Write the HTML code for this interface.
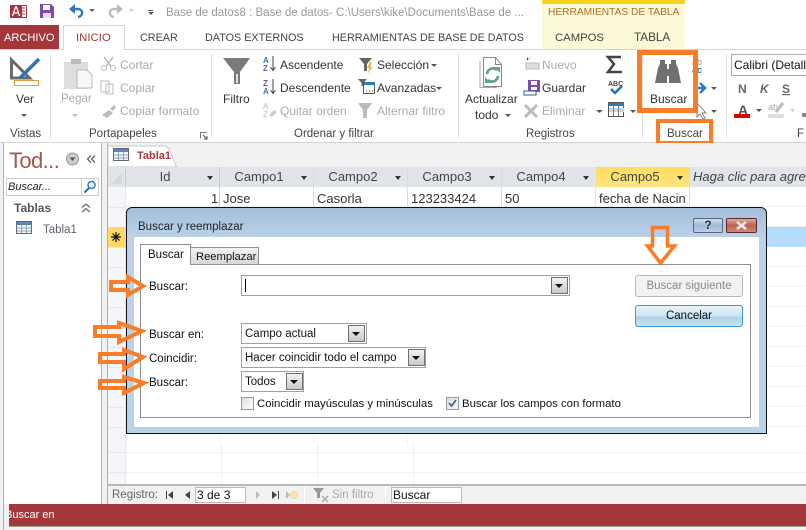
<!DOCTYPE html>
<html><head><meta charset="utf-8"><style>
html,body{margin:0;padding:0}
body{width:806px;height:530px;overflow:hidden;position:relative;background:#f1f1f1;font-family:"Liberation Sans",sans-serif;font-size:12px;color:#444}
.a,.t{position:absolute}
.t{white-space:nowrap;line-height:16px}
.g{color:#aaa}
.h{font-size:13px;color:#444;transform:translateX(-50%)}
.c{font-size:13px;color:#333}
.d{color:#111;font-size:11.500px}
.tb{font-size:10.800px}
.b{position:absolute;width:17px;height:17px;box-sizing:border-box;border:1px solid #707070;background:linear-gradient(#f2f2f2,#c8c8c8)}
.b:after{content:"";position:absolute;left:3px;top:6px;border:4px solid transparent;border-top:4px solid #111;border-bottom:0}
.cb{position:absolute;box-sizing:border-box;border:1px solid #9a9a9a;background:#fff}
.tri{position:absolute;width:0;height:0;border:3px solid transparent;border-top:3px solid #555;border-bottom:0}
.sl{position:absolute;left:108px;width:18px;height:1px;background:#e6e6ee}
.rl{position:absolute;left:767px;width:39px;height:1px;background:#f0f0f0}
svg{position:absolute;overflow:visible}
</style></head><body>

<!-- title bar -->
<div class="a" style="left:0;top:0;width:806px;height:50px;background:#fff"></div>
<div class="a" style="left:542px;top:0;width:143px;height:50px;background:#fdf9d7"></div>
<div class="a" style="left:542px;top:0;width:143px;height:4px;background:#f5d21c"></div>
<svg style="left:0;top:0" width="160" height="25">
 <rect x="18.500" y="5.500" width="8" height="12" fill="#fff" stroke="#a4373a"/>
 <path d="M20 8h5M20 11h5M20 14h5" stroke="#a4373a"/>
 <rect x="10" y="5" width="12" height="13" fill="#a4373a"/>
 <path d="M12.500 16l3-9h1l3 9M14 13h4" stroke="#fff" fill="none" stroke-width="1.300"/>
 <path d="M40 4h11l3 3v11h-14z" fill="#7a4bb0"/><rect x="43" y="5" width="7" height="5" fill="#fff"/><rect x="43" y="13" width="8" height="5" fill="#e6def0"/>
 <path d="M72 9h6c5 0 6 7 0 8" stroke="#2a7bbf" stroke-width="2.400" fill="none"/><path d="M75 4l-6 5 6 5z" fill="#2a7bbf"/>
 <path d="M89 9h6l-3 3z" fill="#666"/>
 <path d="M120 9h-6c-5 0-6 7 0 8" stroke="#bbb" stroke-width="2.400" fill="none"/><path d="M117 4l6 5-6 5z" fill="#bbb"/>
 <path d="M129 9h5l-2.500 3z" fill="#ccc"/>
 <path d="M148 10.500h5" stroke="#555"/><path d="M148 12h6l-3 3z" fill="#555"/>
</svg>
<div class="t" style="left:166px;top:5px;color:#999;font-size:11.500px">Base de datos8 : Base de datos- C:\Users\kike\Documents\Base de ...</div>
<div class="t" style="left:548px;top:5px;color:#a8702c;font-size:10.200px">HERRAMIENTAS DE TABLA</div>

<!-- tabs -->
<div class="a" style="left:0;top:25px;width:59px;height:25px;background:#a4373a"></div>
<div class="a" style="left:0;top:49px;width:806px;height:1px;background:#d4d4d4"></div>
<div class="a" style="left:63px;top:25px;width:60px;height:25px;background:#fff;border:1px solid #d4d4d4;border-bottom:0"></div>
<div class="t" style="left:4px;top:30px;color:#fff;font-size:11.100px">ARCHIVO</div>
<div class="t" style="left:76px;top:30px;color:#a4373a;font-size:11.400px">INICIO</div>
<div class="t tb" style="left:140px;top:30px">CREAR</div>
<div class="t tb" style="left:205px;top:30px">DATOS EXTERNOS</div>
<div class="t tb" style="left:332px;top:30px">HERRAMIENTAS DE BASE DE DATOS</div>
<div class="t" style="left:555px;top:30px;font-size:11.300px">CAMPOS</div>
<div class="t" style="left:634px;top:30px;font-size:11.700px">TABLA</div>

<!-- ribbon -->
<div class="a" style="left:0;top:50px;width:806px;height:92px;background:#fff;border-bottom:1px solid #d4d4d4"></div>
<div class="a" style="left:50px;top:54px;width:1px;height:84px;background:#e0e0e0"></div>
<div class="a" style="left:211px;top:54px;width:1px;height:84px;background:#e0e0e0"></div>
<div class="a" style="left:458px;top:54px;width:1px;height:84px;background:#e0e0e0"></div>
<div class="a" style="left:642px;top:54px;width:1px;height:84px;background:#e0e0e0"></div>
<div class="a" style="left:726px;top:54px;width:1px;height:84px;background:#e0e0e0"></div>

<svg style="left:0;top:50px" width="806" height="92">
 <!-- Ver -->
 <path d="M11.500 10v18h18z" fill="none" stroke="#6a6a6a" stroke-width="3"/>
 <path d="M20 28l19-19" stroke="#2b73c0" stroke-width="3.500"/>
 <rect x="14.500" y="30.500" width="24" height="5" fill="#fff" stroke="#e89a3c"/>
 <!-- Pegar -->
 <path d="M64 12h24v27h-24z" fill="#ddd"/><rect x="71" y="9" width="10" height="5" fill="#bbb"/>
 <path d="M77 20h10l5 5v13h-15z" fill="#f7f7f7" stroke="#bbb"/>
 <!-- cortar -->
 <path d="M104 7l9 12M113 7l-9 12" stroke="#bbb" stroke-width="1.500"/><circle cx="104" cy="18" r="2.500" fill="#fff" stroke="#bbb"/><circle cx="113" cy="18" r="2.500" fill="#fff" stroke="#bbb"/>
 <!-- copiar -->
 <path d="M101 31h8v11h-8zM106 34h7v10h-7z" fill="#fff" stroke="#bbb"/>
 <!-- copiar formato -->
 <path d="M102 65l7-5 4 3-6 5zM110 59l4-4 2 2-3 4z" fill="#bbb"/>
 <!-- Filtro -->
 <path d="M223 8h27l-10 14v12h-6v-12z" fill="#7a7a7a"/><path d="M236 24h2v9h-2z" fill="#ddd"/>
 <!-- sort icons -->
 <text x="263" y="13" font-size="8" font-family="Liberation Sans" fill="#2a7bbf" font-weight="bold">A</text><text x="263" y="21" font-size="8" font-family="Liberation Sans" fill="#7a4bb0" font-weight="bold">Z</text>
 <path d="M273 6v14M270.500 17l2.500 3.500 2.500-3.500" stroke="#444" fill="none"/>
 <text x="263" y="36" font-size="8" font-family="Liberation Sans" fill="#7a4bb0" font-weight="bold">Z</text><text x="263" y="44" font-size="8" font-family="Liberation Sans" fill="#2a7bbf" font-weight="bold">A</text>
 <path d="M273 29v14M270.500 40l2.500 3.500 2.500-3.500" stroke="#444" fill="none"/>
 <text x="263" y="59" font-size="8" font-family="Liberation Sans" fill="#bbb">A</text><text x="263" y="67" font-size="8" font-family="Liberation Sans" fill="#bbb">Z</text>
 <path d="M269 65l5-5 3 2-5 5z" fill="#ccc"/>
 <!-- seleccion -->
 <path d="M359 8h13l-5 6v7h-3v-7z" fill="#666"/><path d="M370 12l-3 6h2.500l-2 6 5-7h-2.500l2-5z" fill="#f0b13c"/>
 <!-- avanzadas -->
 <path d="M358 29h9l-3.500 4v3h-2v-3z" fill="#666"/><rect x="363.500" y="32.500" width="11" height="11" fill="#fff" stroke="#555"/><rect x="364" y="32" width="11" height="3" fill="#2a7bbf"/><path d="M366 41h1M369 41h1M372 41h1" stroke="#444"/>
 <!-- alternar -->
 <path d="M358 53h14l-5 7v8h-4v-8z" fill="#bbb"/>
 <!-- actualizar -->
 <path d="M483.500 7.500h12l6 7v22h-18z" fill="#fff" stroke="#888"/><path d="M495.500 7.500v7h6" fill="none" stroke="#888"/><path d="M480 10.500v27h17" stroke="#aaa" fill="none"/>
 <path d="M487 24a6 6 0 0 1 10-4" stroke="#5fa58e" stroke-width="2.800" fill="none"/><path d="M498 26a6 6 0 0 1-10 4" stroke="#5fa58e" stroke-width="2.800" fill="none"/>
 <path d="M494 17h6v6zM491 33h-6v-6z" fill="#5fa58e"/>
 <!-- nuevo -->
 <rect x="526" y="13" width="13" height="6" fill="#ddd" stroke="#bbb"/><path d="M527 7l2 2-2 2M530 6v4" stroke="#ddd"/>
 <!-- guardar -->
 <rect x="528" y="30" width="12" height="12" fill="#7a4bb0"/><rect x="531" y="31" width="6" height="4" fill="#fff"/><rect x="531" y="37" width="6" height="3" fill="#fff"/><path d="M524 41h12v4h-12z" fill="#fff" stroke="#2a5f9e"/>
 <!-- eliminar -->
 <path d="M525 55l12 12M537 55l-12 12" stroke="#bbb" stroke-width="3"/>
 <!-- sigma etc -->
 <path d="M621 7h-13l6 7-6 8h14" fill="none" stroke="#444" stroke-width="2.500"/>
 <text x="608" y="36" font-size="7" font-weight="bold" font-family="Liberation Sans" fill="#444">ABC</text>
 <path d="M611 39l4 4 7-7" fill="none" stroke="#2a6fb8" stroke-width="2.500"/>
 <rect x="608.500" y="52.500" width="15" height="14" fill="#fff" stroke="#555"/><rect x="609" y="53" width="15" height="3" fill="#2a7bbf"/><rect x="609" y="58" width="15" height="4" fill="#c4d8e8"/><path d="M613.500 56v10M618.500 56v10" stroke="#777"/>
 <path d="M596 60h7l-3.500 3zM630 60h6l-3 3z" fill="#555"/>
 <!-- binoculars -->
 <path d="M655 33l3-15 2-4v-4h5v4h2v19h-12zM669 14h2v-4h5v4l2 4 3 15h-12z" fill="#6f6f6f"/><rect x="666" y="19" width="5" height="7" fill="#6f6f6f"/>
 <!-- right of buscar -->
 <text x="692" y="15" font-size="9" font-family="Liberation Sans" fill="#999">ab</text>
 <text x="692" y="23" font-size="9" font-weight="bold" font-family="Liberation Sans" fill="#2a6fb8">ac</text>
 <path d="M698 38h6M700 33l5 5-5 5" stroke="#2a7bbf" stroke-width="2.500" fill="none"/>
 <path d="M697 53v14l3-3 3 5 2-1-3-5h4z" fill="#fff" stroke="#888"/>
 <path d="M711 37h6l-3 3zM711 60h6l-3 3z" fill="#555"/>
 <!-- font -->
 <rect x="731.500" y="4.500" width="76" height="21" fill="#fff" stroke="#aaa"/>
 <text x="738" y="43" font-size="12" font-weight="bold" font-family="Liberation Sans" fill="#666">N</text>
 <text x="760" y="43" font-size="12" font-weight="bold" font-style="italic" font-family="Liberation Sans" fill="#666">K</text>
 <text x="782" y="43" font-size="12" font-weight="bold" font-family="Liberation Sans" fill="#666" text-decoration="underline">S</text>
 <text x="738" y="65" font-size="14" font-weight="bold" font-family="Liberation Sans" fill="#555">A</text>
 <rect x="734" y="64" width="16" height="4" fill="#e00000"/>
 <path d="M756 59h6l-3 3z" fill="#555"/>
 <text x="768" y="60" font-size="9" font-family="Liberation Sans" fill="#aaa">ab</text>
 <rect x="768" y="64" width="16" height="4" fill="#ddd"/>
 <path d="M776 62l7-9" stroke="#bbb" stroke-width="3"/>
 <path d="M790 59h5l-2.500 3z" fill="#ccc"/>
 <rect x="802" y="63" width="4" height="4" fill="#888"/>
</svg>

<div class="t" style="left:16px;top:91px;color:#333">Ver</div>
<div class="tri" style="left:21px;top:114px"></div>
<div class="t" style="left:10px;top:126px;font-size:11.500px">Vistas</div>
<div class="t g" style="left:61px;top:91px;font-size:11.500px">Pegar</div>
<div class="tri" style="left:72px;top:114px;border-top-color:#bbb"></div>
<div class="t g" style="left:120px;top:57px">Cortar</div>
<div class="t g" style="left:120px;top:80px">Copiar</div>
<div class="t g" style="left:120px;top:103px">Copiar formato</div>
<div class="t" style="left:89px;top:126px;font-size:11.500px">Portapapeles</div>
<svg style="left:200px;top:132px" width="8" height="8"><path d="M0.500 6.500v-6h6" fill="none" stroke="#777"/><path d="M3 3l4 4M7 4v3h-3" fill="none" stroke="#555"/></svg>
<div class="t" style="left:223px;top:91px;color:#333">Filtro</div>
<div class="t" style="left:280px;top:57px;color:#333">Ascendente</div>
<div class="t" style="left:280px;top:80px;color:#333">Descendente</div>
<div class="t g" style="left:280px;top:103px">Quitar orden</div>
<div class="t" style="left:377px;top:57px;color:#333">Selección</div>
<div class="tri" style="left:431px;top:64px"></div>
<div class="t" style="left:377px;top:80px;color:#333">Avanzadas</div>
<div class="tri" style="left:436px;top:87px"></div>
<div class="t g" style="left:377px;top:103px">Alternar filtro</div>
<div class="t" style="left:294px;top:126px;font-size:11.500px">Ordenar y filtrar</div>
<div class="t" style="left:465px;top:91px;color:#333">Actualizar</div>
<div class="t" style="left:475px;top:107px;color:#333">todo</div>
<div class="tri" style="left:505px;top:114px"></div>
<div class="t g" style="left:542px;top:57px">Nuevo</div>
<div class="t" style="left:542px;top:80px;color:#333">Guardar</div>
<div class="t g" style="left:542px;top:103px">Eliminar</div>
<div class="t" style="left:526px;top:126px;font-size:11.500px">Registros</div>
<div class="t" style="left:650px;top:91px;color:#333">Buscar</div>
<div class="t" style="left:667px;top:126px;font-size:11.500px">Buscar</div>
<div class="t" style="left:734px;top:57px;color:#111">Calibri (Detall</div>
<div class="t" style="left:797px;top:126px;font-size:11.500px">F</div>

<div class="a" style="left:637px;top:50px;width:61px;height:63px;box-sizing:border-box;border:5px solid #f97d26"></div>
<div class="a" style="left:656px;top:119px;width:57px;height:26px;box-sizing:border-box;border:4px solid #f97d26"></div>

<!-- Nav pane -->
<div class="a" style="left:3px;top:143px;width:99px;height:361px;box-sizing:border-box;background:#fff;border-left:1px solid #b0b0b0;border-right:1px solid #b0b0b0"></div>
<div class="t" style="left:9px;top:146px;font-size:22px;line-height:30px;letter-spacing:-.6px;color:#a4574a">Tod...</div>
<svg style="left:65px;top:152px" width="35" height="16"><circle cx="7.500" cy="7" r="6" fill="#ccc" stroke="#999"/><path d="M4.500 5.500h6l-3 3.500z" fill="#555"/><path d="M26 3.500l-3.500 3.500 3.500 3.500M30 3.500l-3.500 3.500 3.500 3.500" stroke="#666" fill="none" stroke-width="1.300"/></svg>
<div class="a" style="left:6px;top:178px;width:93px;height:18px;box-sizing:border-box;background:#fff;border:1px solid #ccc"></div>
<div class="a" style="left:81px;top:178px;width:1px;height:18px;background:#ccc"></div>
<div class="t" style="left:8px;top:179px;font-size:11px;font-style:italic;color:#222">Buscar...</div>
<svg style="left:83px;top:180px" width="14" height="14"><circle cx="8.500" cy="5" r="3.500" fill="#fff" stroke="#2a7bbf" stroke-width="1.500"/><path d="M6 8l-4.500 4.500" stroke="#2a6fb8" stroke-width="2"/></svg>
<div class="t" style="left:14px;top:200px;font-weight:bold;color:#555">Tablas</div>
<svg style="left:81px;top:203px" width="10" height="10"><path d="M1 4.500l4-3.500 4 3.500M1 9l4-3.500 4 3.500" stroke="#666" fill="none" stroke-width="1.200"/></svg>
<svg style="left:16px;top:221px" width="16" height="13"><rect x=".5" y=".5" width="15" height="12" fill="#f3f6fa" stroke="#667"/><rect x="1" y="1" width="14" height="3" fill="#5b86b8"/><path d="M1 7h14M1 10h14M5.500 4v8M10.500 4v8" stroke="#8fa4bc"/></svg>
<div class="t" style="left:43px;top:222px;font-size:11.500px;color:#66606e">Tabla1</div>

<!-- main table -->
<div class="a" style="left:107px;top:143px;width:699px;height:361px;background:#fff;border-left:1px solid #b0b0b0;box-sizing:border-box"></div>
<div class="a" style="left:108px;top:143px;width:698px;height:24px;background:#f1f1f1"></div>
<svg style="left:108px;top:145px" width="76" height="23"><path d="M0 22V1h56c4 0 6 4 9 12s3 9 5 9z" fill="#fff" stroke="#c8c8c8"/></svg>
<svg style="left:113px;top:148px" width="17" height="13"><rect x=".5" y=".5" width="15" height="12" fill="#f3f6fa" stroke="#667"/><rect x="1" y="1" width="14" height="3" fill="#5b86b8"/><path d="M1 7h14M1 10h14M5.500 4v8M10.500 4v8" stroke="#8fa4bc"/></svg>
<div class="t" style="left:137px;top:148px;font-weight:bold;font-size:11px;color:#a4373a">Tabla1</div>

<div class="a" style="left:108px;top:167px;width:698px;height:20px;background:#e1e5ea"></div>
<div class="a" style="left:595px;top:167px;width:94px;height:20px;background:linear-gradient(#ffdc5e,#ffe57f)"></div>
<div class="a" style="left:108px;top:187px;width:18px;height:298px;background:#f5f6fc"></div>
<div class="a" style="left:125px;top:187px;width:1px;height:298px;background:#e8e8ee"></div>
<div class="a" style="left:108px;top:227px;width:18px;height:20px;background:#ffd966"></div>
<svg style="left:111px;top:232px" width="10" height="10"><path d="M5 0v10M0 5h10M1.500 1.500l7 7M8.500 1.500l-7 7" stroke="#111" stroke-width="1.200"/></svg>
<div class="a" style="left:767px;top:227px;width:39px;height:20px;background:#b5dcff"></div>
<svg style="left:108px;top:167px" width="16" height="20"><path d="M3 17L14 6v11z" fill="#d4d8de"/></svg>

<div class="sl" style="top:207px"></div><div class="sl" style="top:247px"></div><div class="sl" style="top:267px"></div><div class="sl" style="top:287px"></div><div class="sl" style="top:307px"></div><div class="sl" style="top:327px"></div><div class="sl" style="top:347px"></div><div class="sl" style="top:367px"></div><div class="sl" style="top:387px"></div><div class="sl" style="top:407px"></div><div class="sl" style="top:427px"></div>

<div class="a" style="left:125px;top:167px;width:1px;height:20px;background:#c6cbd1"></div>
<div class="a" style="left:219px;top:167px;width:1px;height:40px;background:#c6cbd1"></div>
<div class="a" style="left:313px;top:167px;width:1px;height:40px;background:#d8dbe0"></div>
<div class="a" style="left:407px;top:167px;width:1px;height:40px;background:#d8dbe0"></div>
<div class="a" style="left:501px;top:167px;width:1px;height:40px;background:#d8dbe0"></div>
<div class="a" style="left:595px;top:167px;width:1px;height:40px;background:#e5e5e5"></div>
<div class="a" style="left:689px;top:167px;width:1px;height:40px;background:#d8dbe0"></div>
<div class="a" style="left:126px;top:206px;width:680px;height:1px;background:#efefef"></div>
<div class="rl" style="top:226px"></div><div class="rl" style="top:266px"></div><div class="rl" style="top:286px"></div><div class="rl" style="top:306px"></div><div class="rl" style="top:326px"></div><div class="rl" style="top:346px"></div><div class="rl" style="top:366px"></div><div class="rl" style="top:386px"></div><div class="rl" style="top:406px"></div><div class="rl" style="top:426px"></div>
<div class="a" style="left:219px;top:434px;width:1px;height:9px;background:#f2f2f2"></div>
<div class="a" style="left:313px;top:434px;width:1px;height:9px;background:#f2f2f2"></div>
<div class="a" style="left:407px;top:434px;width:1px;height:9px;background:#f2f2f2"></div>
<div class="a" style="left:126px;top:452px;width:680px;height:1px;background:#f0f0f0"></div>
<div class="a" style="left:126px;top:472px;width:680px;height:1px;background:#f0f0f0"></div>
<div class="sl" style="top:452px"></div>
<div class="sl" style="top:472px"></div>
<div class="a" style="left:221px;top:443px;width:1px;height:41px;background:#f0f0f0"></div>
<div class="a" style="left:317px;top:443px;width:1px;height:41px;background:#f0f0f0"></div>
<div class="a" style="left:413px;top:443px;width:1px;height:41px;background:#f0f0f0"></div>

<div class="t h" style="left:165px;top:169px">Id</div>
<div class="t h" style="left:259px;top:169px">Campo1</div>
<div class="t h" style="left:353px;top:169px">Campo2</div>
<div class="t h" style="left:447px;top:169px">Campo3</div>
<div class="t h" style="left:541px;top:169px">Campo4</div>
<div class="t h" style="left:635px;top:169px">Campo5</div>
<div class="t" style="left:693px;top:169px;font-size:13px;font-style:italic;color:#444">Haga clic para agre</div>
<div class="tri" style="left:207px;top:176px;border-width:4px 3.500px 0;border-top-color:#333"></div>
<div class="tri" style="left:301px;top:176px;border-width:4px 3.500px 0;border-top-color:#333"></div>
<div class="tri" style="left:395px;top:176px;border-width:4px 3.500px 0;border-top-color:#333"></div>
<div class="tri" style="left:489px;top:176px;border-width:4px 3.500px 0;border-top-color:#333"></div>
<div class="tri" style="left:583px;top:176px;border-width:4px 3.500px 0;border-top-color:#333"></div>
<div class="tri" style="left:677px;top:176px;border-width:4px 3.500px 0;border-top-color:#333"></div>

<div class="t c" style="left:211px;top:191px">1</div>
<div class="t c" style="left:223px;top:191px">Jose</div>
<div class="t c" style="left:317px;top:191px">Casorla</div>
<div class="t c" style="left:411px;top:191px">123233424</div>
<div class="t c" style="left:505px;top:191px">50</div>
<div class="t c" style="left:599px;top:191px">fecha de Nacin</div>

<!-- record nav -->
<div class="a" style="left:108px;top:484px;width:698px;height:2px;background:#b8b8b8"></div>
<div class="a" style="left:108px;top:486px;width:698px;height:18px;background:#f1f1f1"></div>
<div class="t" style="left:112px;top:487px;color:#666;font-size:11.500px">Registro:</div>
<svg style="left:165px;top:489px" width="140" height="12"><path d="M1.500 2v8" stroke="#444"/><path d="M8 2v8l-5-4zM25 2v8l-5-4z" fill="#444"/><path d="M91 2v8l4-4z" fill="#bbb"/><path d="M107 2v8l5-4z" fill="#444"/><path d="M113.500 2v8" stroke="#444"/><path d="M121 2v8l4-4z" fill="#bbb"/><circle cx="129" cy="6" r="3.500" fill="#fbe6a0" stroke="#f0d070" stroke-dasharray="1.500 1"/></svg>
<div class="a" style="left:195px;top:487px;width:51px;height:16px;box-sizing:border-box;background:#fff;border:1px solid #bbb"></div>
<div class="t" style="left:197px;top:487px;color:#111;font-size:12px">3 de 3</div>
<div class="a" style="left:304px;top:486px;width:1px;height:18px;background:#fff"></div>
<svg style="left:313px;top:487px" width="20" height="16"><path d="M0 1h11l-4 5v5h-3v-5z" fill="#999"/><path d="M9 9l6 6M15 9l-6 6" stroke="#aaa" stroke-width="1.500"/></svg>
<div class="t g" style="left:332px;top:487px;font-size:11.500px">Sin filtro</div>
<div class="a" style="left:385px;top:486px;width:1px;height:18px;background:#fff"></div>
<div class="a" style="left:391px;top:487px;width:71px;height:16px;box-sizing:border-box;background:#fff;border:1px solid #bbb"></div>
<div class="t" style="left:393px;top:487px;color:#111;font-size:12px">Buscar</div>

<!-- status -->
<div class="a" style="left:9px;top:504px;width:797px;height:22px;background:#a4373a"></div>
<div class="a" style="left:9px;top:526px;width:797px;height:1px;background:#a0a0a0"></div>
<div class="a" style="left:0;top:527px;width:806px;height:3px;background:#f1f1f1"></div>
<div class="a" style="left:9px;top:507px;width:100px;height:16px;overflow:hidden"><div class="t" style="left:-4px;top:0;color:#fff;font-size:11px">Buscar en</div></div>
<div class="a" style="left:3px;top:504px;width:1px;height:26px;background:#b0b0b0"></div>

<!-- dialog -->
<div class="a" style="left:126px;top:207px;width:641px;height:227px;box-sizing:border-box;border:1px solid #111;border-radius:6px 6px 0 0;background:linear-gradient(#a3bedb 0,#bcd2e8 30px,#b9d3ea 100%)"></div>
<div class="t" style="left:138px;top:219px;color:#222;font-size:11.500px">Buscar y reemplazar</div>
<div class="a" style="left:693px;top:218px;width:30px;height:15px;box-sizing:border-box;border:1px solid #59677a;border-radius:2px;background:linear-gradient(#cfe0f0 0,#9fb9d6 50%,#b9d0e6 100%);text-align:center;color:#333;font-size:12px;line-height:13px;font-weight:bold">?</div>
<div class="a" style="left:726px;top:218px;width:31px;height:15px;box-sizing:border-box;border:1px solid #5a2b2b;border-radius:2px;background:linear-gradient(#dfa89e 0,#c1604f 50%,#c98a7e 100%)"></div>
<svg style="left:735px;top:221px" width="14" height="9"><path d="M2 1l9 7M11 1l-9 7" stroke="#eee" stroke-width="2.500"/></svg>
<div class="a" style="left:134px;top:237px;width:625px;height:190px;background:#fff"></div>
<div class="a" style="left:140px;top:264px;width:611px;height:154px;box-sizing:border-box;border:1px solid #8e8f94"></div>
<div class="a" style="left:140px;top:244px;width:51px;height:21px;box-sizing:border-box;background:#fff;border:1px solid #8e8f94;border-bottom:0"></div>
<div class="a" style="left:191px;top:247px;width:68px;height:18px;box-sizing:border-box;background:linear-gradient(#f2f2f2,#d8d8d8);border:1px solid #8e8f94;border-left:0"></div>
<div class="t d" style="left:148px;top:247px">Buscar</div>
<div class="t d" style="left:196px;top:249px;font-size:11.200px">Reemplazar</div>

<div class="t d" style="left:149px;top:279px">Buscar:</div>
<div class="t d" style="left:149px;top:327px">Buscar en:</div>
<div class="t d" style="left:149px;top:351px">Coincidir:</div>
<div class="t d" style="left:149px;top:375px">Buscar:</div>

<div class="a" style="left:241px;top:275px;width:329px;height:21px;box-sizing:border-box;border:1px solid #a0a0a0;background:#fff"></div>
<div class="a" style="left:245px;top:279px;width:1px;height:13px;background:#000"></div>
<div class="b" style="left:551px;top:277px"></div>
<div class="a" style="left:241px;top:323px;width:126px;height:21px;box-sizing:border-box;border:1px solid #a0a0a0;background:#fff"></div>
<div class="t d" style="left:245px;top:326px">Campo actual</div>
<div class="b" style="left:348px;top:325px"></div>
<div class="a" style="left:241px;top:347px;width:185px;height:21px;box-sizing:border-box;border:1px solid #a0a0a0;background:#fff"></div>
<div class="t d" style="left:245px;top:350px">Hacer coincidir todo el campo</div>
<div class="b" style="left:408px;top:349px"></div>
<div class="a" style="left:241px;top:371px;width:63px;height:21px;box-sizing:border-box;border:1px solid #a0a0a0;background:#fff"></div>
<div class="t d" style="left:245px;top:374px">Todos</div>
<div class="b" style="left:286px;top:373px"></div>

<div class="cb" style="left:241px;top:397px;width:13px;height:13px;background:linear-gradient(135deg,#ddd,#fff)"></div>
<div class="t d" style="left:257px;top:396px;font-size:11.350px">Coincidir mayúsculas y minúsculas</div>
<div class="cb" style="left:446px;top:397px;width:13px;height:13px;background:linear-gradient(135deg,#ddd,#f6f6f6)"></div>
<svg style="left:448px;top:399px" width="9" height="9"><path d="M1 4l2.500 3L8 1" fill="none" stroke="#3a5a8a" stroke-width="1.600"/></svg>
<div class="t d" style="left:462px;top:396px;font-size:11.350px">Buscar los campos con formato</div>

<div class="a" style="left:635px;top:275px;width:108px;height:22px;box-sizing:border-box;border:1px solid #b8b8b8;border-radius:3px;background:#f2f2f2;text-align:center;line-height:21px;color:#858a90;font-size:11.500px">Buscar siguiente</div>
<div class="a" style="left:635px;top:305px;width:108px;height:22px;box-sizing:border-box;border:1px solid #3c9bd6;border-radius:3px;background:linear-gradient(#e6f3fa 0,#cfe6f2 50%,#a9d2e8 55%,#c8e2f0 100%);text-align:center;line-height:21px;color:#111;font-size:11.500px">Cancelar</div>

<!-- orange arrows -->
<svg style="left:0;top:0" width="806" height="530">
 <g fill="none" stroke="#f97d26" stroke-width="4" stroke-linejoin="miter">
 <path d="M111 282h17v-5l15 9-15 9v-5h-17z"/>
 <path d="M95 327h24v-4l23 8-23 11v-6h-24z"/>
 <path d="M100 354h24v-4l19 7-19 12v-7h-24z"/>
 <path d="M100 381h24v-4l20 6-20 10v-5h-24z"/>
 </g>
 <path d="M652.500 227.500h15v18.500h7l-14 17-13-17h5z" fill="none" stroke="#f97d26" stroke-width="3.500"/>
</svg>
</body></html>
